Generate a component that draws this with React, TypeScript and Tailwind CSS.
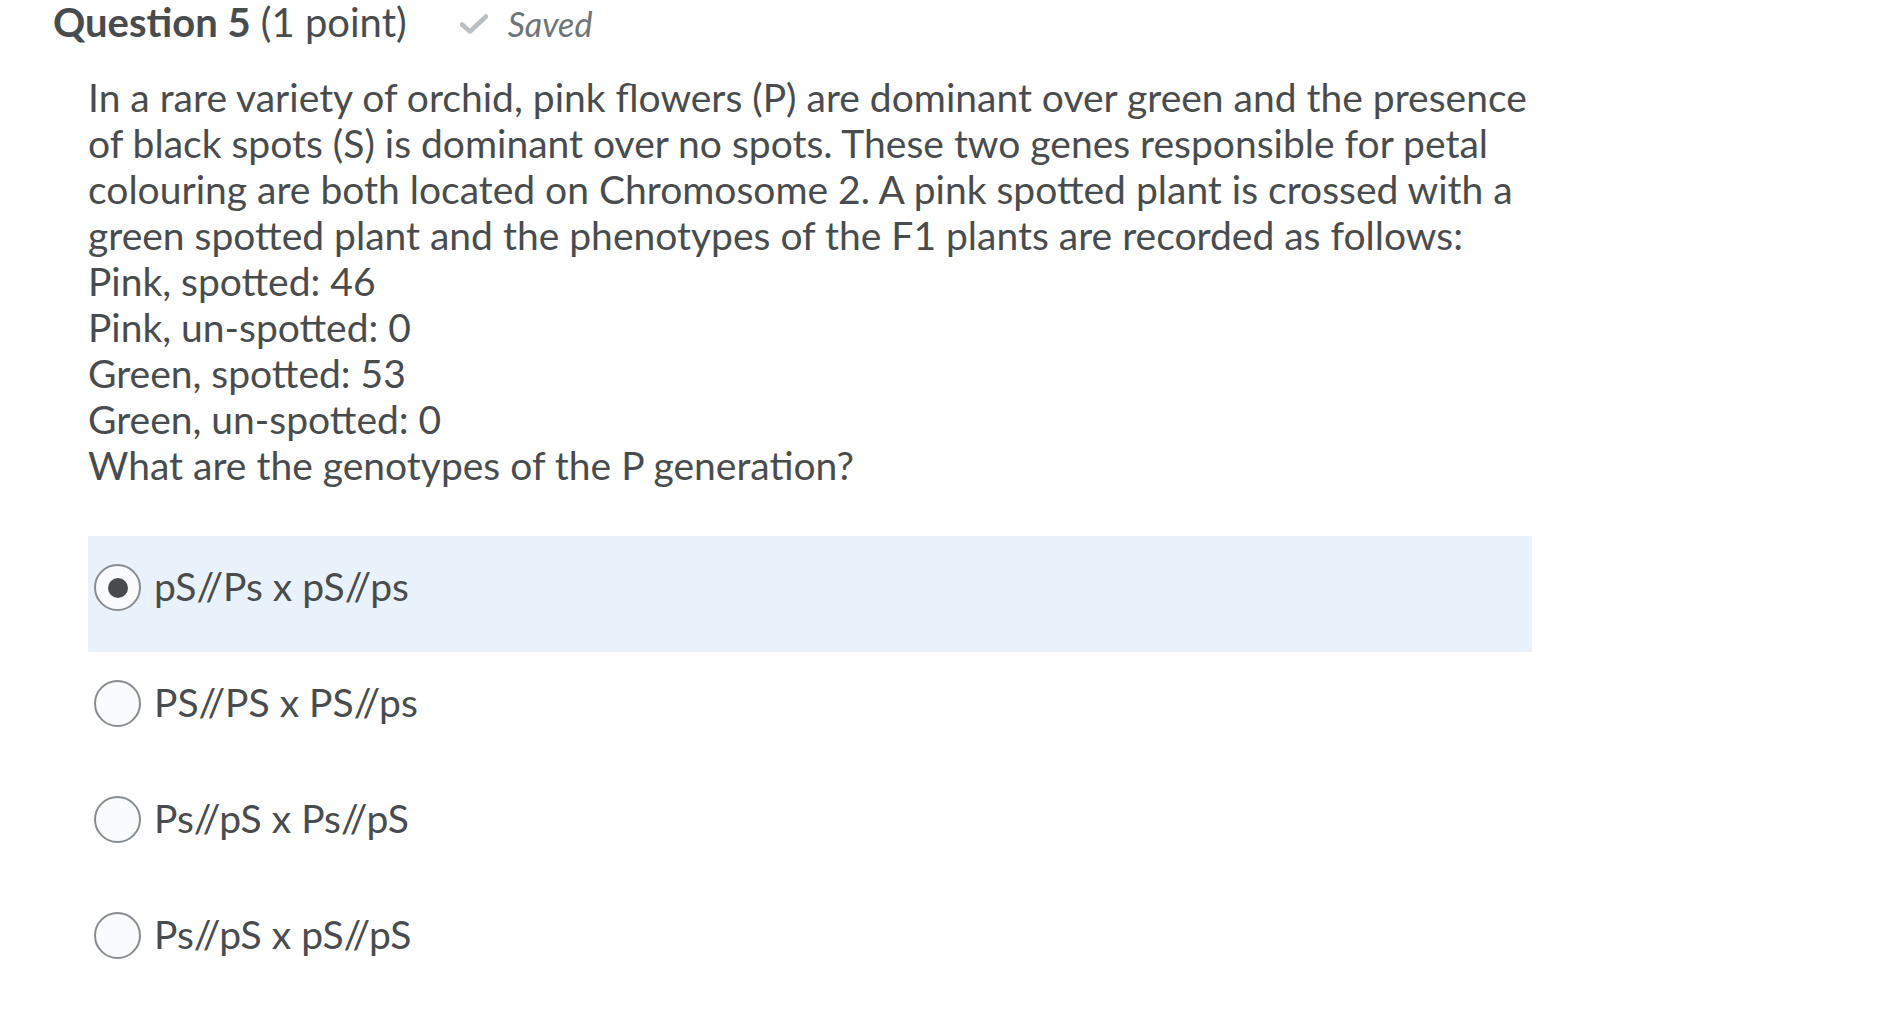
const lines = [
  'In a rare variety of orchid, pink flowers (P) are dominant over green and the presence',
  'of black spots (S) is dominant over no spots. These two genes responsible for petal',
  'colouring are both located on Chromosome 2. A pink spotted plant is crossed with a',
  'green spotted plant and the phenotypes of the F1 plants are recorded as follows:',
  'Pink, spotted: 46',
  'Pink, un-spotted: 0',
  'Green, spotted: 53',
  'Green, un-spotted: 0',
  'What are the genotypes of the P generation?',
]

const options = ['pS//Ps x pS//ps', 'PS//PS x PS//ps', 'Ps//pS x Ps//pS', 'Ps//pS x pS//pS']

function Radio({ checked }: { checked: boolean }) {
  return (
    <span className="flex h-[47px] w-[47px] shrink-0 items-center justify-center rounded-full border-2 border-[#868c8f] bg-[#f9fbff]">
      {checked ? <span className="h-[20px] w-[20px] rounded-full bg-[#494c4e]" /> : null}
    </span>
  )
}

export default function App() {
  return (
    <div className="min-h-screen bg-white text-[#494c4e]" style={{ fontFamily: 'Lato, "Noto Sans", sans-serif' }}>
      <div className="flex items-baseline pt-[2px] pl-[53px] text-[40px] leading-[40px]">
        <span className="font-bold">Question 5</span>
        <span className="ml-[10px]">(1 point)</span>
        <span className="ml-[53px] flex items-baseline text-[34px] italic text-[#6e7477]">
          <svg className="mr-[20px] h-[20px] w-[28px] self-center" viewBox="0 0 28 20" fill="none">
            <path d="M2 10.5 L10 17.5 L26 2.5" stroke="#b9bfc3" strokeWidth="4.5" strokeLinecap="round" strokeLinejoin="round" />
          </svg>
          Saved
        </span>
      </div>

      <div className="mt-[30px] pl-[88px] text-[39px] leading-[46px]">
        {lines.map((l) => (
          <div key={l}>{l}</div>
        ))}
      </div>

      <div className="mt-[48px] ml-[88px] w-[1444px]">
        {options.map((o, i) => (
          <label
            key={o}
            className={
              'flex h-[116px] items-start gap-[13px] pl-[6px] pt-[28px] ' + (i === 0 ? 'bg-[#e9f1fb]' : '')
            }
          >
            <Radio checked={i === 0} />
            <span className="-mt-[1px] text-[39px] leading-[46px]">{o}</span>
          </label>
        ))}
      </div>
    </div>
  )
}
